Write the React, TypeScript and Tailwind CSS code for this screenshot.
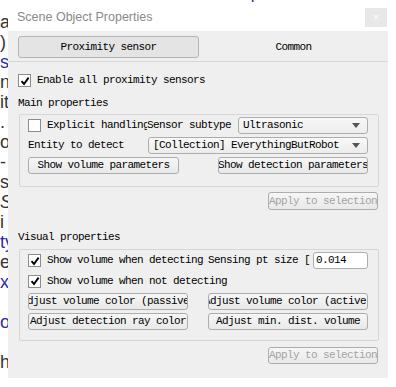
import React from 'react';

const mono = "font-['Liberation_Mono','DejaVu_Sans_Mono',monospace] text-[11px] tracking-[-0.6px]";

const CheckBox = ({ checked }: { checked?: boolean }) => (
  <div className="w-[13px] h-[13px] shrink-0 bg-white border border-[#8c8c8c] flex items-center justify-center">
    {checked && (
      <svg width="10" height="10" viewBox="0 0 10 10">
        <path d="M1.5 5.2 L4 8 L8.6 1.6" fill="none" stroke="#000" strokeWidth="1.9" />
      </svg>
    )}
  </div>
);

const Btn = ({ children, className = '', disabled }: { children: React.ReactNode; className?: string; disabled?: boolean }) => (
  <div
    className={`h-[17px] flex items-center justify-center overflow-hidden whitespace-nowrap rounded-[3px] border border-[#adadad] bg-gradient-to-b from-[#f6f6f6] to-[#e9e9e9] ${mono} ${disabled ? 'text-[#a3a3a3]' : 'text-black'} ${className}`}
  >
    <span className="shrink-0">{children}</span>
  </div>
);

const Combo = ({ value, className = '' }: { value: string; className?: string }) => (
  <div className={`h-[17px] flex items-center justify-between pl-[4px] pr-[7px] rounded-[3px] border border-[#adadad] bg-gradient-to-b from-[#f8f8f8] to-[#ececec] text-black ${mono} ${className}`}>
    <span className="whitespace-nowrap">{value}</span>
    <svg width="8" height="5" viewBox="0 0 8 5">
      <path d="M0 0 H8 L4 5 Z" fill="#555" />
    </svg>
  </div>
);

const leftLines: [string, string][] = [
  ['a', 'text-[#333]'],
  [')', 'text-[#333]'],
  ['s', 'text-[#2b2ba8]'],
  ['na', 'text-[#333]'],
  ['it', 'text-[#333]'],
  ['.', 'text-[#333]'],
  ['o', 'text-[#333]'],
  ['-', 'text-[#333]'],
  ['s', 'text-[#333]'],
  ['Sc', 'text-[#333] italic'],
  ['i', 'text-[#333]'],
  ['ty', 'text-[#2b2ba8]'],
  ['e', 'text-[#333]'],
  ['x', 'text-[#2b2ba8]'],
  ['', ''],
  ['o)', 'text-[#2b2ba8]'],
  ['', ''],
  ['h', 'text-[#333]'],
];

const App = () => {
  return (
    <div className="w-[396px] h-[387px] bg-white overflow-hidden flex flex-col">
      <div className="h-[3px] overflow-hidden">
        <div className="-mt-[18px] ml-[2px] h-[24px] leading-[24px] whitespace-nowrap font-['Liberation_Sans',sans-serif] text-[17px] text-[#444]">
          ntElement name in EL <span className="text-[#2b2ba8]">all sensor parameters</span> of the robot
        </div>
      </div>

      <div className="flex">
        <div className="w-[8px] overflow-hidden pt-[9px] flex flex-col">
          {leftLines.map(([t, c], i) => (
            <div key={i} className={`h-[20px] leading-[20px] whitespace-nowrap font-['Liberation_Sans',sans-serif] text-[18px] ${c}`}>
              {t}
            </div>
          ))}
        </div>

        <div className="w-[380px] flex flex-col text-black">
          {/* title bar */}
          <div className="h-[28px] bg-white flex items-start justify-between">
            <span className="mt-[5px] ml-[9px] font-['Liberation_Sans',sans-serif] text-[12.5px] text-[#8a8a8a]">
              Scene Object Properties
            </span>
            <div className="mt-[5px] mr-[1px] w-[22px] h-[19px] bg-[#e8e8e8] flex items-center justify-center text-[11px] text-white font-['Liberation_Sans',sans-serif]">
              ×
            </div>
          </div>

          {/* body */}
          <div className="h-[347px] bg-[#efefef] flex flex-col">
            <div className="h-[31px] border-b border-[#d6d6d6] flex">
              <div className="w-[191px] pl-[10px] pt-[5px]">
                <div className={`h-[22px] rounded-[3px] border border-[#b4b4b4] bg-[#e4e4e4] flex items-center justify-center ${mono}`}>
                  Proximity sensor
                </div>
              </div>
              <div className={`flex-1 flex items-center justify-center pt-[2px] ${mono}`}>Common</div>
            </div>

            <div className="pl-[10px] pr-[9px] flex flex-col">
              <div className="mt-[12px] h-[13px] flex items-center gap-[6px]">
                <CheckBox checked />
                <span className={mono}>Enable all proximity sensors</span>
              </div>

              <div className={`mt-[10px] h-[12px] leading-[12px] ${mono}`}>Main properties</div>

              <div className="mt-[5px] ml-[1px] h-[73px] rounded-[2px] border border-[#d6d6d6] pl-[8px] pr-[10px] pt-[2px] flex flex-col gap-[3px]">
                <div className="h-[17px] flex items-center">
                  <div className="w-[119px] overflow-hidden flex items-center gap-[6px]">
                    <CheckBox />
                    <span className={`whitespace-nowrap ${mono}`}>Explicit handling</span>
                  </div>
                  <span className={`w-[91px] whitespace-nowrap overflow-hidden ${mono}`}>Sensor subtype</span>
                  <Combo value="Ultrasonic" className="flex-1" />
                </div>
                <div className="h-[17px] flex items-center">
                  <span className={`w-[120px] ${mono}`}>Entity to detect</span>
                  <Combo value="[Collection] EverythingButRobot" className="flex-1" />
                </div>
                <div className="h-[17px] flex items-center justify-between">
                  <Btn className="w-[151px]">Show volume parameters</Btn>
                  <Btn className="w-[150px]">Show detection parameters</Btn>
                </div>
              </div>

              <div className="mt-[5px] flex justify-end pr-[1px]">
                <Btn disabled className="w-[110px] h-[18px]">Apply to selection</Btn>
              </div>

              <div className={`mt-[21px] h-[12px] leading-[12px] ${mono}`}>Visual properties</div>

              <div className="mt-[6px] ml-[1px] h-[92px] rounded-[2px] border border-[#d6d6d6] pl-[8px] pr-[10px] pt-[2px] flex flex-col">
                <div className="h-[17px] flex items-center">
                  <div className="w-[180px] overflow-hidden flex items-center gap-[6px]">
                    <CheckBox checked />
                    <span className={`whitespace-nowrap ${mono}`}>Show volume when detecting</span>
                  </div>
                  <span className={`w-[102px] mr-[3px] whitespace-nowrap overflow-hidden ${mono}`}>Sensing pt size [mm]</span>
                  <div className={`flex-1 h-[17px] bg-white rounded-[3px] border border-[#adadad] flex items-center pl-[2px] ${mono}`}>
                    0.014
                  </div>
                </div>
                <div className="mt-[5px] h-[14px] flex items-center gap-[6px]">
                  <CheckBox checked />
                  <span className={`whitespace-nowrap ${mono}`}>Show volume when not detecting</span>
                </div>
                <div className="mt-[5px] h-[17px] flex items-center justify-between">
                  <Btn className="w-[160px]">Adjust volume color (passive)</Btn>
                  <Btn className="w-[160px]">Adjust volume color (active)</Btn>
                </div>
                <div className="mt-[3px] h-[17px] flex items-center justify-between">
                  <Btn className="w-[160px]">Adjust detection ray color</Btn>
                  <Btn className="w-[160px]">Adjust min. dist. volume</Btn>
                </div>
              </div>

              <div className="mt-[6px] flex justify-end pr-[1px]">
                <Btn disabled className="w-[110px] h-[17px]">Apply to selection</Btn>
              </div>
            </div>
          </div>
        </div>
      </div>
    </div>
  );
};

export default App;
